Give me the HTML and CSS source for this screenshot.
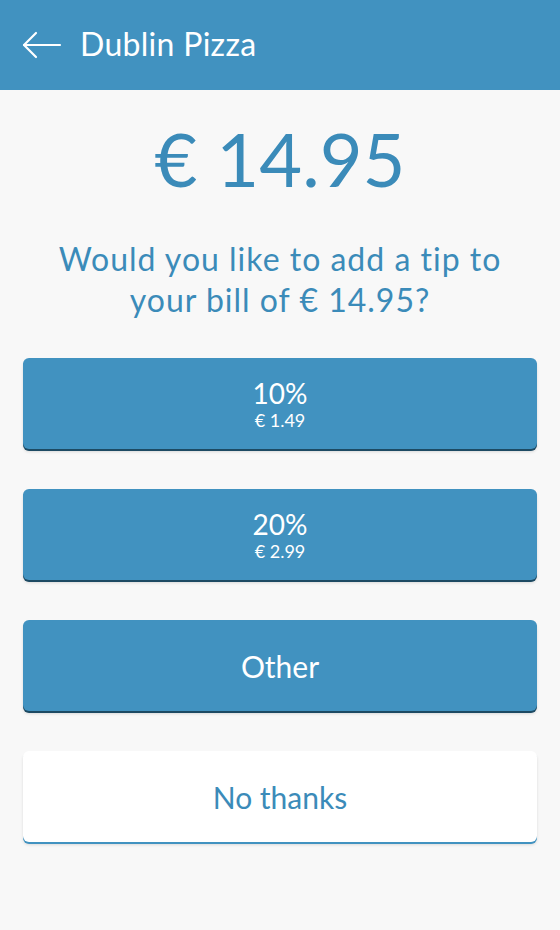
FILE: index.html
```html
<!DOCTYPE html>
<html lang="en">
<head>
    <meta charset="UTF-8">
    <meta name="viewport" content="width=device-width, initial-scale=1.0">
    <title>Dublin Pizza - Add a tip</title>
    <link rel="stylesheet" href="styles.css">
</head>
<body>
    <header class="top-bar">
        <a class="back-link" href="#" aria-label="Back">
            <svg width="40" height="30" viewBox="0 0 40 30" fill="none" stroke="#fff" stroke-width="2.2" stroke-linecap="round" stroke-linejoin="round">
                <path d="M2 15 H38"/>
                <path d="M14 3 L2 15 L14 27"/>
            </svg>
        </a>
        <span class="top-title">Dublin Pizza</span>
    </header>

    <main class="tip-page">
        <div class="bill-total">€ 14.95</div>
        <p class="tip-question">Would you like to add a tip to your bill of € 14.95?</p>

        <div class="tip-options">
            <button class="tip-button">
                <span class="tip-percent">10%</span>
                <span class="tip-amount">€ 1.49</span>
            </button>
            <button class="tip-button">
                <span class="tip-percent">20%</span>
                <span class="tip-amount">€ 2.99</span>
            </button>
            <button class="tip-button">
                <span class="tip-label">Other</span>
            </button>
            <button class="tip-button no-tip">
                <span class="tip-label">No thanks</span>
            </button>
        </div>
    </main>
</body>
</html>
```

FILE: styles.css
```css
body {
    font-family: Lato, "Open Sans", sans-serif;
    margin: 0;
    padding: 0;
    background-color: #f8f8f8;
}

.top-bar {
    display: flex;
    align-items: center;
    height: 90px;
    padding: 0 22px 3px;
    background-color: #4192c0;
    color: #fff;
    box-sizing: border-box;
}

.back-link {
    display: flex;
    margin-right: 18px;
    margin-top: 2px;
}

.top-title {
    font-size: 32px;
    letter-spacing: 0.3px;
}

.tip-page {
    padding: 32px 23px 40px;
}

.bill-total {
    text-align: center;
    color: #3b8bb9;
    font-size: 74px;
    line-height: 1;
}

.tip-question {
    max-width: 460px;
    margin: 42px auto 38px;
    text-align: center;
    color: #3b8bb9;
    font-size: 32px;
    line-height: 41px;
    letter-spacing: 1px;
}

.tip-options {
    display: flex;
    flex-direction: column;
    gap: 40px;
}

.tip-button {
    display: flex;
    flex-direction: column;
    align-items: center;
    justify-content: center;
    height: 91px;
    width: 100%;
    border: none;
    border-radius: 6px;
    background-color: #4192c0;
    color: #fff;
    font-family: inherit;
    box-shadow: 0 2px 0 #1d4a63, 0 3px 3px rgba(0, 0, 0, 0.12);
    cursor: pointer;
}

.tip-percent {
    font-size: 28px;
    line-height: 32px;
}

.tip-amount {
    font-size: 18px;
    line-height: 22px;
}

.tip-label {
    font-size: 30px;
}

.no-tip {
    background-color: #fff;
    color: #3b8bb9;
    box-shadow: 0 2px 0 #4192c0, 0 3px 3px rgba(0, 0, 0, 0.12);
}
```
